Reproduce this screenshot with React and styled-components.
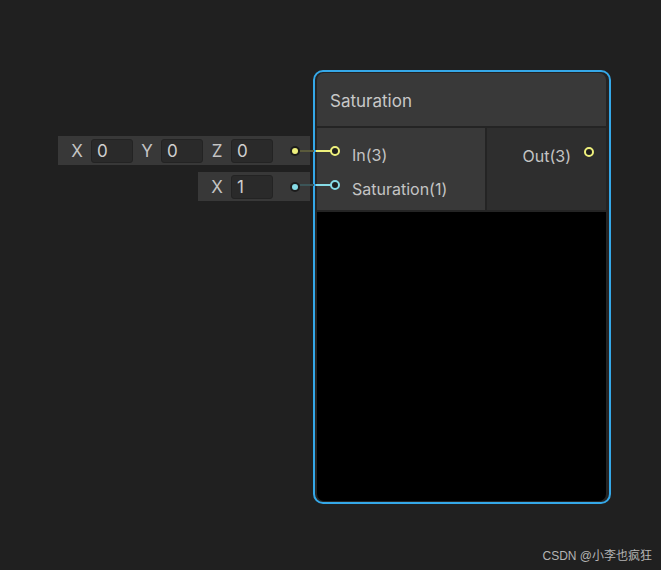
import React from 'react';
import styled, { createGlobalStyle } from 'styled-components';

const YELLOW = '#eef07c';
const CYAN = '#86dbe6';
const BLUE = '#35a8e8';

const GlobalStyle = createGlobalStyle`
  html, body {
    margin: 0;
    padding: 0;
    background: #202020;
  }
  body {
    font-family: Inter, "Noto Sans", sans-serif;
  }
`;

const vectorInputs = [
  { fields: [['X', '0'], ['Y', '0'], ['Z', '0']], color: YELLOW },
  { fields: [['X', '1']], color: CYAN },
];

const inputPorts = [
  { name: 'In(3)', color: YELLOW, dim: '#5a5a3c' },
  { name: 'Saturation(1)', color: CYAN, dim: '#3c5558' },
];

const App = () => (
  <Page>
    <GlobalStyle />
    <Canvas>
      <InputStack>
        {vectorInputs.map(({ fields, color }, i) => (
          <InputBar key={i}>
            {fields.map(([label, value]) => (
              <Field key={label}>
                <FieldLabel>{label}</FieldLabel>
                <FieldBox>{value}</FieldBox>
              </Field>
            ))}
            <Dot $color={color} />
          </InputBar>
        ))}
      </InputStack>

      <Node>
        <Header>Saturation</Header>
        <Ports>
          <InputColumn>
            {inputPorts.map(({ name, color, dim }) => (
              <PortRow key={name}>
                <Socket $color={color}>
                  <Wire $color={color} $dim={dim} />
                </Socket>
                <PortLabel>{name}</PortLabel>
              </PortRow>
            ))}
          </InputColumn>
          <OutputColumn>
            <PortRow $out>
              <PortLabel>Out(3)</PortLabel>
              <Socket $color={YELLOW} />
            </PortRow>
          </OutputColumn>
        </Ports>
        <Preview />
      </Node>
    </Canvas>
    <Watermark>CSDN @小李也疯狂</Watermark>
  </Page>
);

const Page = styled.div`
  height: 100vh;
  box-sizing: border-box;
  padding: 70px 0 0 58px;
  display: flex;
  flex-direction: column;
  background: #202020;
`;

const Canvas = styled.div`
  display: flex;
  align-items: flex-start;
`;

const InputStack = styled.div`
  width: 252px;
  margin-top: 66px;
  display: flex;
  flex-direction: column;
  align-items: flex-end;
  gap: 7px;
`;

const InputBar = styled.div`
  height: 29px;
  box-sizing: border-box;
  padding: 0 12px 0 5px;
  background: #383838;
  display: flex;
  align-items: center;
`;

const Field = styled.div`
  display: flex;
  align-items: center;
`;

const FieldLabel = styled.span`
  width: 28px;
  text-align: center;
  color: #c4c4c4;
  font-size: 17px;
`;

const FieldBox = styled.div`
  width: 42px;
  height: 24px;
  box-sizing: border-box;
  padding-left: 5px;
  background: #2a2a2a;
  border: 1px solid #232323;
  border-radius: 3px;
  color: #d0d0d0;
  font-size: 17px;
  line-height: 22px;
`;

const Dot = styled.span`
  width: 6px;
  height: 6px;
  margin-left: 19px;
  border-radius: 50%;
  background: ${(p) => p.$color};
  box-shadow: 0 0 0 2px #1c1c1c;
`;

const Node = styled.div`
  width: 298px;
  height: 434px;
  box-sizing: border-box;
  margin-left: 3px;
  padding: 1px 3px 1px 2px;
  border: 2px solid ${BLUE};
  border-radius: 10px;
  background: #242424;
  display: flex;
  flex-direction: column;
  gap: 2px;
`;

const Header = styled.div`
  height: 53px;
  box-sizing: border-box;
  flex-shrink: 0;
  padding: 3px 0 0 13px;
  display: flex;
  align-items: center;
  background: #393939;
  border-radius: 7px 7px 0 0;
  color: #c8c8c8;
  font-size: 17px;
`;

const Ports = styled.div`
  height: 82px;
  flex-shrink: 0;
  display: flex;
  gap: 2px;
`;

const InputColumn = styled.div`
  width: 168px;
  box-sizing: border-box;
  padding: 6px 0 0 13px;
  background: #393939;
`;

const OutputColumn = styled.div`
  flex: 1;
  box-sizing: border-box;
  padding: 7px 12px 0 0;
  background: #2e2e2e;
`;

const PortRow = styled.div`
  height: 34px;
  display: flex;
  align-items: center;
  justify-content: ${(p) => (p.$out ? 'flex-end' : 'flex-start')};
  gap: ${(p) => (p.$out ? '13px' : '12px')};
`;

const Socket = styled.span`
  position: relative;
  width: 10px;
  height: 10px;
  box-sizing: border-box;
  flex-shrink: 0;
  border: 2px solid ${(p) => p.$color};
  border-radius: 50%;
  background: #1f1f1f;
`;

const Wire = styled.span`
  position: absolute;
  right: 100%;
  top: 50%;
  width: 31px;
  height: 2px;
  margin-right: 1px;
  transform: translateY(-50%);
  background: linear-gradient(
    to right,
    ${(p) => p.$dim} 0 14px,
    ${BLUE} 14px 16px,
    ${(p) => p.$color} 16px
  );
`;

const PortLabel = styled.span`
  padding-top: 7px;
  color: #c4c4c4;
  font-size: 16px;
`;

const Preview = styled.div`
  flex: 1;
  background: #000;
  border-radius: 0 0 7px 7px;
`;

const Watermark = styled.div`
  margin-top: auto;
  align-self: flex-end;
  padding: 0 9px 7px 0;
  color: #b4b4b4;
  font-size: 12px;
  font-family: "Liberation Sans", "Noto Sans CJK SC", sans-serif;
`;

export default App;
